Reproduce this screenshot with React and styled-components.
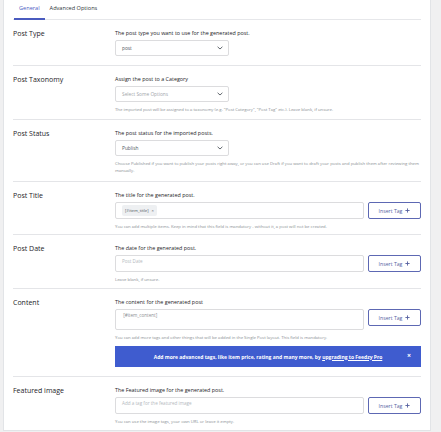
import React from 'react'
import styled, { createGlobalStyle } from 'styled-components'

const GlobalStyle = createGlobalStyle`
    body {
        margin: 0;
        background: #f0f0f1;
        font-family: "Open Sans", "Noto Sans", sans-serif;
        color: #1d2327;
    }
`

const Page = styled.div`
    width: 441px;
    height: 432px;
    padding-left: 3px;
    box-sizing: border-box;
    overflow: hidden;
`

const Panel = styled.div`
    width: 428px;
    height: 431px;
    box-sizing: border-box;
    background: #ffffff;
    border: 1px solid #e2e4e7;
    border-top: none;
    padding: 0 9px;
`

const Tabs = styled.div`
    display: flex;
    height: 20px;
    box-sizing: border-box;
    border-bottom: 1px solid #e6e7ea;
    padding-left: 1px;
`

const Tab = styled.div`
    padding: 4px 5px 0;
    height: 20px;
    box-sizing: border-box;
    font-size: 5.6px;
    line-height: 8px;
    color: ${p => (p.$active ? '#4a5bbf' : '#2c3338')};
    border-bottom: 2px solid ${p => (p.$active ? '#4a5bbf' : 'transparent')};
`

const Row = styled.div`
    display: grid;
    grid-template-columns: 102px 1fr;
    padding: 9px 0 ${p => p.$pb ?? 5}px;
    border-top: ${p => (p.$first ? 'none' : '1px solid #e4e5e8')};
`

const Label = styled.div`
    font-size: 7px;
    line-height: 9px;
    color: #1d2327;
`

const Field = styled.div`
    display: flex;
    flex-direction: column;
    min-width: 0;
`

const Desc = styled.div`
    font-size: 5.4px;
    line-height: 8px;
    color: #1d2327;
    margin-bottom: 3px;
`

const Help = styled.div`
    font-size: 4.25px;
    line-height: 7px;
    color: #8a8f94;
    margin-top: 4px;
`

const Select = styled.div`
    width: 114px;
    height: 16px;
    box-sizing: border-box;
    border: 1px solid #dcdcde;
    border-radius: 2px;
    display: flex;
    align-items: center;
    justify-content: space-between;
    padding: 0 5px 0 6px;
    font-size: 4.8px;
    color: ${p => (p.$placeholder ? '#a0a5aa' : '#50575e')};
`

const Controls = styled.div`
    display: flex;
    gap: 4px;
    align-items: flex-start;
`

const Input = styled.div`
    flex: 1;
    height: ${p => p.$h || 17}px;
    box-sizing: border-box;
    border: 1px solid #dcdcde;
    border-radius: 2px;
    padding: 2px 6px;
    font-size: 4.6px;
    line-height: 6px;
    color: ${p => (p.$placeholder ? '#b4b9be' : '#8c8f94')};
`

const Chip = styled.span`
    display: inline-flex;
    align-items: center;
    gap: 3px;
    height: 11px;
    padding: 0 3px;
    background: #eef0f2;
    border-radius: 2px;
    font-size: 4.2px;
    color: #50575e;
`

const TagButton = styled.div`
    width: 53px;
    height: 17px;
    box-sizing: border-box;
    border: 1px solid #5d68b3;
    border-radius: 2px;
    display: flex;
    align-items: center;
    justify-content: center;
    gap: 3px;
    font-size: 5.2px;
    color: #55609f;
`

const Banner = styled.div`
    margin-top: 5px;
    height: 21px;
    background: #3f5ccf;
    display: flex;
    align-items: center;
    justify-content: center;
    position: relative;
    font-size: 5px;
    font-weight: 700;
    color: #ffffff;

    a {
        color: #ffffff;
        text-decoration: underline;
    }
`

const Close = styled.span`
    position: absolute;
    right: 10px;
    top: 6px;
    font-size: 7px;
    line-height: 8px;
    font-weight: 700;
`

const Chevron = () => (
    <svg width="6" height="4" viewBox="0 0 6 4">
        <polyline points="0.6,0.8 3,3 5.4,0.8" fill="none" stroke="#50575e" strokeWidth="0.9" />
    </svg>
)

const Plus = () => (
    <svg width="5" height="5" viewBox="0 0 5 5">
        <path d="M2.5 0.4V4.6M0.4 2.5H4.6" stroke="#55609f" strokeWidth="0.9" />
    </svg>
)

const InsertTag = () => (
    <TagButton>
        Insert Tag <Plus />
    </TagButton>
)

export default function App() {
    return (
        <Page>
            <GlobalStyle />
            <Panel>
                <Tabs>
                    <Tab $active>General</Tab>
                    <Tab>Advanced Options</Tab>
                </Tabs>

                <Row $first $pb={9}>
                    <Label>Post Type</Label>
                    <Field>
                        <Desc>The post type you want to use for the generated post.</Desc>
                        <Select>post <Chevron /></Select>
                    </Field>
                </Row>

                <Row $pb={6}>
                    <Label>Post Taxonomy</Label>
                    <Field>
                        <Desc>Assign the post to a Category</Desc>
                        <Select $placeholder>Select Some Options <Chevron /></Select>
                        <Help>The imported post will be assigned to a taxonomy (e.g. "Post Category", "Post Tag" etc.). Leave blank, if unsure.</Help>
                    </Field>
                </Row>

                <Row $pb={7}>
                    <Label>Post Status</Label>
                    <Field>
                        <Desc>The post status for the imported posts.</Desc>
                        <Select>Publish <Chevron /></Select>
                        <Help>Choose Published if you want to publish your posts right away, or you can use Draft if you want to draft your posts and publish them after reviewing them manually.</Help>
                    </Field>
                </Row>

                <Row $pb={4}>
                    <Label>Post Title</Label>
                    <Field>
                        <Desc>The title for the generated post.</Desc>
                        <Controls>
                            <Input>
                                <Chip>[#item_title] <span>×</span></Chip>
                            </Input>
                            <InsertTag />
                        </Controls>
                        <Help>You can add multiple items. Keep in mind that this field is mandatory - without it, a post will not be created.</Help>
                    </Field>
                </Row>

                <Row $pb={5}>
                    <Label>Post Date</Label>
                    <Field>
                        <Desc>The date for the generated post.</Desc>
                        <Controls>
                            <Input $placeholder>Post Date</Input>
                            <InsertTag />
                        </Controls>
                        <Help>Leave blank, if unsure.</Help>
                    </Field>
                </Row>

                <Row $pb={9}>
                    <Label>Content</Label>
                    <Field>
                        <Desc>The content for the generated post</Desc>
                        <Controls>
                            <Input $h={21}>&nbsp;[#item_content]</Input>
                            <InsertTag />
                        </Controls>
                        <Help>You can add more tags and other things that will be added in the Single Post layout. This field is mandatory.</Help>
                        <Banner>
                            <span>Add more advanced tags, like item price, rating and many more, by <a href="#">upgrading to Feedzy Pro</a></span>
                            <Close>×</Close>
                        </Banner>
                    </Field>
                </Row>

                <Row>
                    <Label>Featured image</Label>
                    <Field>
                        <Desc>The Featured image for the generated post.</Desc>
                        <Controls>
                            <Input $placeholder>Add a tag for the featured image</Input>
                            <InsertTag />
                        </Controls>
                        <Help>You can use the image tags, your own URL or leave it empty.</Help>
                    </Field>
                </Row>
            </Panel>
        </Page>
    )
}
